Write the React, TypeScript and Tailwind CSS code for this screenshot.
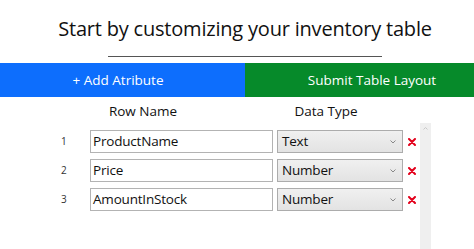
import React from "react";

const rows = [
  { n: 1, name: "ProductName", type: "Text" },
  { n: 2, name: "Price", type: "Number" },
  { n: 3, name: "AmountInStock", type: "Number" },
];

function RemoveIcon() {
  return (
    <svg width="8" height="8" viewBox="0 0 8 8" className="shrink-0">
      <path d="M1 1L7 7M7 1L1 7" stroke="#e3001b" strokeWidth="2" strokeLinecap="round" />
    </svg>
  );
}

export default function App() {
  return (
    <div className="w-[474px] h-[249px] overflow-hidden bg-white font-['Open_Sans',sans-serif] text-[#111]">
      <div className="w-[508px] -ml-[9px] flex flex-col items-center">
        <h1 className="pt-[15px] text-[20px] leading-[28px] font-normal tracking-[-0.2px]">
          Start by customizing your inventory table
        </h1>
        <div className="mt-[13px] w-[274px] h-px bg-[#555]" />

        <div className="mt-[6px] w-full flex h-[34px] text-white text-[13.5px]">
          <button className="flex-1 bg-[#0d6efd] flex items-center justify-center">+ Add Atribute</button>
          <button className="flex-1 bg-[#068a2a] flex items-center justify-center">Submit Table Layout</button>
        </div>

        <div className="mt-[4px] w-full flex text-[13.5px] leading-[20px] whitespace-nowrap">
          <div className="w-[285px] pl-[19px] text-center">Row Name</div>
          <div className="w-[100px] text-center">Data Type</div>
        </div>

        <div className="mt-[2px] w-full flex h-[130px]">
          <div className="w-[429px] flex flex-col gap-[6px] pt-[7px]">
            {rows.map((r) => (
              <div key={r.n} className="flex items-center h-[23px]">
                <span className="w-[99px] pl-[70px] text-[10px] text-[#333]">{r.n}</span>
                <div className="w-[183px] h-[23px] border border-[#b3b3b3] bg-white flex items-center pl-[2px] text-[13.5px] tracking-[-0.2px]">
                  {r.name}
                </div>
                <div className="ml-[4px] w-[126px] h-[23px] border border-[#acacac] bg-gradient-to-b from-[#f0f0f0] to-[#e3e3e3] flex items-center justify-between pl-[4px] pr-[6px] text-[13.5px] tracking-[-0.2px]">
                  <span>{r.type}</span>
                  <svg width="6" height="4" viewBox="0 0 6 4">
                    <path d="M0.5 0.5L3 3L5.5 0.5" stroke="#888" fill="none" strokeWidth="1" />
                  </svg>
                </div>
                <div className="ml-[5px]">
                  <RemoveIcon />
                </div>
              </div>
            ))}
          </div>
          <div className="w-[11px] h-full bg-[#efefef] flex justify-center pt-[4px]">
            <svg width="5" height="3" viewBox="0 0 5 3">
              <path d="M0.5 2.5L2.5 0.5L4.5 2.5" stroke="#c8c8c8" fill="none" strokeWidth="1" />
            </svg>
          </div>
        </div>
      </div>
    </div>
  );
}
